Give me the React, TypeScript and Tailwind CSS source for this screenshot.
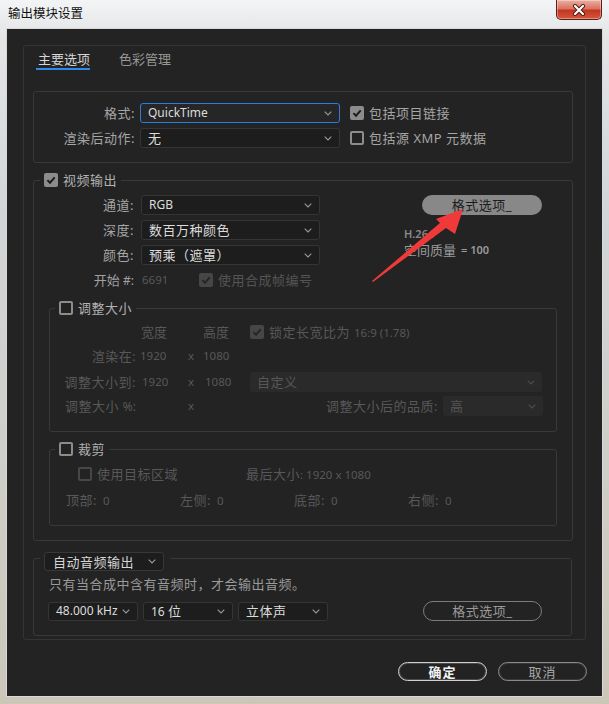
import React from 'react';

const FONT = "font-['Noto_Sans','Noto_Sans_CJK_SC',sans-serif]";

function Chevron({ color = '#9a9a9a' }: { color?: string }) {
  return (
    <svg width="8" height="5" viewBox="0 0 8 5" fill="none" className="shrink-0">
      <path d="M0.7 0.7L4 4L7.3 0.7" stroke={color} strokeWidth="1.1" />
    </svg>
  );
}

function Tick({ color }: { color: string }) {
  return (
    <svg width="10" height="10" viewBox="0 0 10 10" fill="none">
      <path d="M1.4 5.1L4 7.7L8.7 2.3" stroke={color} strokeWidth="2" />
    </svg>
  );
}

type BoxKind = 'on' | 'off' | 'dimOn' | 'dimOff';

function Box({ kind }: { kind: BoxKind }) {
  if (kind === 'on')
    return (
      <span className="flex h-[14px] w-[14px] shrink-0 items-center justify-center rounded-[2px] bg-[#8c8c8c]">
        <Tick color="#1d1d1d" />
      </span>
    );
  if (kind === 'dimOn')
    return (
      <span className="flex h-[14px] w-[14px] shrink-0 items-center justify-center rounded-[2px] bg-[#464646]">
        <Tick color="#262626" />
      </span>
    );
  if (kind === 'off')
    return <span className="block h-[14px] w-[14px] shrink-0 rounded-[2px] border-2 border-[#8c8c8c]" />;
  return <span className="block h-[14px] w-[14px] shrink-0 rounded-[2px] border-2 border-[#474747]" />;
}

type Tone = 'focus' | 'normal' | 'dim';

const toneClass: Record<Tone, string> = {
  focus: 'border border-[#2b7de0] bg-[#262626] text-[#dcdcdc]',
  normal: 'border border-[#353535] bg-[#1d1d1d] text-[#dcdcdc]',
  dim: 'bg-[#2a2a2a] text-[#575757]',
};

function Select({
  children,
  tone = 'normal',
  className = '',
}: {
  children: React.ReactNode;
  tone?: Tone;
  className?: string;
}) {
  return (
    <div
      className={`flex shrink-0 items-center justify-between rounded-[3px] pl-[7px] pr-[7px] ${toneClass[tone]} ${className}`}
    >
      <span className="truncate">{children}</span>
      <Chevron color={tone === 'dim' ? '#4e4e4e' : '#9a9a9a'} />
    </div>
  );
}

function Pill({ children, className = '' }: { children: React.ReactNode; className?: string }) {
  return (
    <div className={`flex shrink-0 items-center justify-center rounded-full ${className}`}>{children}</div>
  );
}

export default function App() {
  return (
    <div
      className={`relative h-[704px] w-[609px] overflow-hidden bg-[linear-gradient(180deg,#f3f4f5_0%,#e3e5e7_5%,#d2d5d8_30%,#cbc6b8_100%)] text-[13px] leading-[16px] ${FONT}`}
    >
      {/* title bar */}
      <div className="flex h-[28px] items-start justify-between">
        <div className="pl-[8px] pt-[6px] text-[12.5px] leading-[16px] text-[#111]">输出模块设置</div>
        <div className="mr-[7px] flex h-[20px] w-[46px] items-center justify-center rounded-b-[5px] border border-t-0 border-[#5b1d14] bg-[linear-gradient(180deg,#eab0a2_0%,#db7460_45%,#c3361f_55%,#d4563f_100%)] shadow-[inset_0_0_0_1px_rgba(255,255,255,0.35)]">
          <svg width="14" height="12" viewBox="0 0 14 12" fill="none">
            <path d="M3 2L11 10M11 2L3 10" stroke="#4a1a12" strokeWidth="4" strokeLinecap="round" />
            <path d="M3 2L11 10M11 2L3 10" stroke="#ffffff" strokeWidth="2.2" strokeLinecap="round" />
          </svg>
        </div>
      </div>

      {/* dark body */}
      <div className="ml-[6px] flex h-[669px] w-[597px] flex-col border border-[#d8d8d8] bg-[#232323]">
        <div className="ml-[16px] mt-[16px] h-[595px] w-[563px] rounded-[3px] border border-[#343434]">
          {/* tabs */}
          <div className="flex pl-[12px]">
            <div className="flex w-[55px] flex-col pt-[5px]">
              <span className="pl-[2px] text-[#d6d6d6]">主要选项</span>
              <span className="mt-[1px] h-[2px] w-[54px] bg-[#2d8ceb]" />
            </div>
            <div className="ml-[28px] pt-[5px] text-[#979797]">色彩管理</div>
          </div>

          {/* format section */}
          <div className="ml-[9px] mt-[21px] flex h-[72px] w-[540px] flex-col gap-[5px] rounded-[3px] border border-[#393939] pt-[11px]">
            <div className="flex h-[20px] items-center">
              <span className="w-[101px] text-right tracking-[0.5px] text-[#a6a6a6]">格式:</span>
              <Select tone="focus" className="ml-[5px] h-[20px] w-[200px] text-[12px]">
                QuickTime
              </Select>
              <span className="ml-[10px] block">
                <Box kind="on" />
              </span>
              <span className="ml-[5px] tracking-[0.5px] text-[#a6a6a6]">包括项目链接</span>
            </div>
            <div className="flex h-[20px] items-center">
              <span className="w-[101px] text-right tracking-[0.5px] text-[#a6a6a6]">渲染后动作:</span>
              <Select className="ml-[5px] h-[20px] w-[200px]">无</Select>
              <span className="ml-[10px] block">
                <Box kind="off" />
              </span>
              <span className="ml-[5px] tracking-[0.5px] text-[#a6a6a6]">包括源 XMP 元数据</span>
            </div>
          </div>

          {/* video output */}
          <fieldset className="ml-[9px] mt-[9px] h-[369px] w-[540px] rounded-[3px] border border-[#393939]">
            <legend className="ml-[6px] px-[4px]">
              <span className="flex h-[16px] items-center gap-[5px]">
                <Box kind="on" />
                <span className="tracking-[0.5px] text-[#b2b2b2]">视频输出</span>
              </span>
            </legend>

            <div className="flex pt-[7px]">
              <div className="flex flex-col gap-[5px]">
                <div className="flex h-[20px] items-center">
                  <span className="w-[100px] text-right tracking-[0.5px] text-[#a6a6a6]">通道:</span>
                  <Select className="ml-[7px] h-[20px] w-[179px] text-[12px]">RGB</Select>
                </div>
                <div className="flex h-[20px] items-center">
                  <span className="w-[100px] text-right tracking-[0.5px] text-[#a6a6a6]">深度:</span>
                  <Select className="ml-[7px] h-[20px] w-[179px] tracking-[0.5px]">数百万种颜色</Select>
                </div>
                <div className="flex h-[20px] items-center">
                  <span className="w-[100px] text-right tracking-[0.5px] text-[#a6a6a6]">颜色:</span>
                  <Select className="ml-[7px] h-[20px] w-[179px] tracking-[0.5px]">预乘（遮罩）</Select>
                </div>
                <div className="flex h-[20px] items-center">
                  <span className="w-[100px] text-right text-[#a0a0a0]">
                    开始 <span className="text-[12px]">#:</span>
                  </span>
                  <span className="ml-[8px] w-[57px] text-[11.5px] text-[#585858]">6691</span>
                  <Box kind="dimOn" />
                  <span className="ml-[5px] tracking-[0.5px] text-[#555555]">使用合成帧编号</span>
                </div>
              </div>

              <div className="ml-[84px] flex flex-col">
                <Pill className="ml-[18px] h-[20px] w-[120px] bg-[#888888] text-[#1b1b1b]">
                  <span className="tracking-[0.5px]">格式选项_</span>
                </Pill>
                <span className="mt-[12px] text-[11px] font-semibold leading-[14px] text-[#8a8a8a]">H.264</span>
                <span className="mt-[1px] flex items-center text-[#9a9a9a]">
                  空间质量
                  <span className="ml-[5px] text-[11px] font-semibold">= 100</span>
                </span>
              </div>
            </div>

            {/* resize */}
            <fieldset className="ml-[15px] mt-[10px] h-[132px] w-[508px] rounded-[3px] border border-[#393939] pr-[13px]">
              <legend className="ml-[5px] px-[4px]">
                <span className="flex h-[16px] items-center gap-[5px]">
                  <Box kind="off" />
                  <span className="tracking-[0.5px] text-[#b2b2b2]">调整大小</span>
                </span>
              </legend>

              <div className="mt-[8px] flex h-[16px] items-center text-[#585858]">
                <span className="w-[86px]" />
                <span className="w-[52px] pl-[5px]">宽度</span>
                <span className="w-[15px]" />
                <span className="w-[47px]">高度</span>
                <Box kind="dimOn" />
                <span className="ml-[5px] tracking-[0.5px]">
                  锁定长宽比为 <span className="text-[11.5px] tracking-normal">16:9 (1.78)</span>
                </span>
              </div>

              <div className="mt-[8px] flex h-[16px] items-center text-[#585858]">
                <span className="w-[86px] text-right tracking-[0.5px]">
                  渲染在<span className="text-[12px]">:</span>
                </span>
                <span className="w-[52px] pl-[4px] text-[11.5px]">1920</span>
                <span className="w-[15px] text-[11.5px]">x</span>
                <span className="w-[47px] text-[11.5px]">1080</span>
              </div>

              <div className="mt-[8px] flex h-[20px] items-center text-[#585858]">
                <span className="w-[86px] text-right tracking-[0.5px]">调整大小到:</span>
                <span className="w-[52px] pl-[6px] text-[11.5px]">1920</span>
                <span className="w-[15px] text-[11.5px]">x</span>
                <span className="w-[47px] pl-[2px] text-[11.5px]">1080</span>
                <Select tone="dim" className="h-[20px] w-[292px] tracking-[0.5px]">
                  自定义
                </Select>
              </div>

              <div className="mt-[4px] flex h-[20px] items-center text-[#585858]">
                <span className="w-[86px] text-right tracking-[0.5px]">
                  调整大小 <span className="text-[12px] tracking-normal">%:</span>
                </span>
                <span className="w-[52px]" />
                <span className="w-[15px] text-[11.5px]">x</span>
                <span className="flex-1 text-right tracking-[0.5px]">调整大小后的品质:</span>
                <Select tone="dim" className="ml-[5px] h-[20px] w-[100px]">
                  高
                </Select>
              </div>
            </fieldset>

            {/* crop */}
            <fieldset className="ml-[15px] mt-[9px] h-[85px] w-[508px] rounded-[3px] border border-[#393939]">
              <legend className="ml-[5px] px-[4px]">
                <span className="flex h-[16px] items-center gap-[5px]">
                  <Box kind="off" />
                  <span className="tracking-[0.5px] text-[#b2b2b2]">裁剪</span>
                </span>
              </legend>

              <div className="ml-[28px] mt-[9px] flex h-[16px] items-center text-[#585858]">
                <span className="flex w-[168px] items-center gap-[5px]">
                  <Box kind="dimOff" />
                  <span className="tracking-[0.5px]">使用目标区域</span>
                </span>
                <span className="tracking-[0.5px]">
                  最后大小<span className="text-[11.5px] tracking-normal">: 1920 x 1080</span>
                </span>
              </div>

              <div className="ml-[16px] mt-[10px] flex h-[16px] items-center text-[#585858]">
                <span className="w-[114px] tracking-[0.5px]">
                  顶部: <span className="ml-[2px] text-[11.5px]">0</span>
                </span>
                <span className="w-[114px] tracking-[0.5px]">
                  左侧: <span className="ml-[2px] text-[11.5px]">0</span>
                </span>
                <span className="w-[114px] tracking-[0.5px]">
                  底部: <span className="ml-[2px] text-[11.5px]">0</span>
                </span>
                <span className="w-[114px] tracking-[0.5px]">
                  右侧: <span className="ml-[2px] text-[11.5px]">0</span>
                </span>
              </div>
            </fieldset>
          </fieldset>

          {/* audio */}
          <fieldset className="ml-[9px] mt-[11px] h-[84px] w-[539px] rounded-[3px] border border-[#393939]">
            <legend className="ml-[6px] h-[12px] pl-[4px] pr-[6px]">
              <div className="flex h-[19px] w-[120px] items-center justify-between rounded-[3px] border border-[#383838] bg-[#1d1d1d] pl-[8px] pr-[7px] text-[#d6d6d6]">
                <span className="tracking-[0.5px]">自动音频输出</span>
                <Chevron />
              </div>
            </legend>

            <div className="ml-[15px] mt-[12px] tracking-[0.5px] text-[#9a9a9a]">
              只有当合成中含有音频时，才会输出音频。
            </div>

            <div className="ml-[14px] mt-[9px] flex items-center gap-[5px]">
              <Select className="h-[19px] w-[90px] text-[12px]">48.000 kHz</Select>
              <Select className="h-[19px] w-[90px]">
                <span className="text-[12px]">16</span> 位
              </Select>
              <Select className="h-[19px] w-[90px] tracking-[0.5px]">立体声</Select>
              <Pill className="ml-[90px] h-[20px] w-[119px] border border-[#7c7c7c] text-[#9a9a9a]">
                <span className="tracking-[0.5px]">格式选项_</span>
              </Pill>
            </div>
          </fieldset>
        </div>

        {/* OK / Cancel */}
        <div className="mt-[22px] flex justify-end gap-[11px] pr-[15px]">
          <Pill className="h-[19px] w-[89px] border border-[#cfcfcf] text-[#f2f2f2] shadow-[inset_0_0_0_1px_#4a4a4a]">
            <span className="font-semibold tracking-[1px]">确定</span>
          </Pill>
          <Pill className="h-[19px] w-[89px] border border-[#8a8a8a] text-[#a8a8a8] shadow-[inset_0_0_0_1px_#383838]">
            <span className="tracking-[1px]">取消</span>
          </Pill>
        </div>
      </div>

      {/* red annotation arrow */}
      <svg
        className="pointer-events-none absolute left-0 top-0"
        width="609"
        height="704"
        viewBox="0 0 609 704"
      >
        <polygon
          points="372,281 440,223 436,219 463,209 455,234 446,228 373,282"
          fill="#f03a3a"
        />
      </svg>
    </div>
  );
}
